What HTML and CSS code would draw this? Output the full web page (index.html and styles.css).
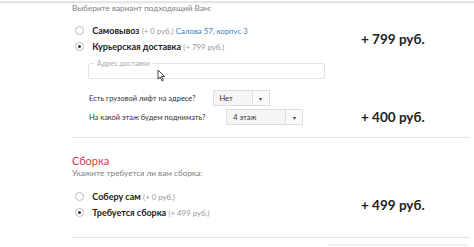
FILE: index.html
```html
<!DOCTYPE html>
<html>

<head>
    <title>Доставка и сборка</title>
    <link rel="stylesheet" href="styles.css">
</head>

<body>
    <div class="topline"></div>
    <div class="container">
        <p class="hint">Выберите вариант подходящий Вам:</p>

        <div class="row row-options">
            <div class="options">
                <label class="option">
                    <span class="radio"></span>
                    <b>Самовывоз</b> <span class="extra">(+ 0 руб.)</span> <span class="link">Салова 57, корпус 3</span>
                </label>
                <label class="option">
                    <span class="radio checked"></span>
                    <b>Курьерская доставка</b> <span class="extra">(+ 799 руб.)</span>
                </label>
            </div>
            <div class="price">+ 799 руб.</div>
        </div>

        <fieldset class="address">
            <legend>Адрес доставки</legend>
            <svg class="cursor" width="9" height="13" viewBox="0 0 9 13">
                <path d="M1 1 L1 10 L3.2 8 L5 12 L6.4 11.3 L4.6 7.5 L7.6 7.5 Z" fill="#fff" stroke="#333" stroke-width="0.9" stroke-linejoin="round"/>
            </svg>
        </fieldset>

        <div class="row row-select row-lift">
            <div class="field">
                <div class="question">Есть грузовой лифт на адресе?</div>
                <div class="select select-lift"><span>Нет</span><i>▾</i></div>
            </div>
        </div>

        <div class="row row-select">
            <div class="field">
                <div class="question">На какой этаж будем поднимать?</div>
                <div class="select select-floor"><span>4 этаж</span><i>▾</i></div>
            </div>
            <div class="price">+ 400 руб.</div>
        </div>

        <hr class="divider">

        <h2>Сборка</h2>
        <p class="hint">Укажите требуется ли вам сборка:</p>

        <div class="row row-options row-assembly">
            <div class="options">
                <label class="option">
                    <span class="radio"></span>
                    <b>Соберу сам</b> <span class="extra">(+ 0 руб.)</span>
                </label>
                <label class="option">
                    <span class="radio checked"></span>
                    <b>Требуется сборка</b> <span class="extra">(+ 499 руб.)</span>
                </label>
            </div>
            <div class="price">+ 499 руб.</div>
        </div>

        <hr class="divider divider-bottom">
        <div class="next-bar"></div>
    </div>
</body>

</html>
```

FILE: styles.css
```css
body {
    margin: 0;
    font-family: Lato, 'Liberation Sans', sans-serif;
    color: #222;
    background: #fff;
    overflow: hidden;
}

.topline {
    height: 2px;
    margin-top: 1px;
    background: #e6e6e6;
    box-shadow: 0 1px 2px rgba(0, 0, 0, 0.05);
}

.container {
    padding-left: 72px;
    padding-right: 4px;
}

.hint {
    margin: 0;
    font-size: 8.2px;
    line-height: 10px;
    color: #808080;
}

.row {
    display: flex;
    align-items: center;
}

.row-options {
    margin-top: 10px;
}

.options {
    width: 289px;
}

.option {
    display: block;
    height: 16px;
    line-height: 16px;
    padding-left: 3px;
    font-size: 9px;
    white-space: nowrap;
}

.option b {
    font-weight: 700;
    color: #222;
}

.extra {
    color: #999;
    font-size: 7.8px;
}

.link {
    color: #3d7fc8;
    font-size: 7.8px;
}

.radio {
    display: inline-block;
    vertical-align: middle;
    position: relative;
    width: 7px;
    height: 7px;
    margin: -2px 6px 0 0;
    border: 1px solid #bbb;
    border-radius: 50%;
}

.radio.checked::after {
    content: '';
    position: absolute;
    left: 2px;
    top: 2px;
    width: 3px;
    height: 3px;
    border-radius: 50%;
    background: #333;
}

.price {
    font-size: 13.5px;
    font-weight: 700;
    color: #222;
    white-space: nowrap;
}

.address {
    position: relative;
    margin: 5px 0 0 16px;
    width: 237px;
    height: 19px;
    padding: 0;
    border: 1px solid #e2e2e2;
    border-radius: 2px;
    box-sizing: border-box;
}

.address legend {
    margin-left: 5px;
    padding: 0 3px;
    font-size: 7.2px;
    line-height: 7px;
    color: #aaa;
}

.cursor {
    position: absolute;
    left: 68px;
    top: 2px;
}

.row-select {
    height: 18px;
}

.row-lift {
    margin-top: 10px;
}

.row-lift + .row-select {
    margin-top: 1px;
}

.field {
    width: 272px;
    margin-left: 17px;
    display: flex;
    align-items: center;
}

.question {
    font-size: 7.5px;
    color: #333;
}

.select {
    display: flex;
    align-items: stretch;
    height: 16px;
    box-sizing: border-box;
    border: 1px solid #ddd;
    background: #f5f5f5;
    font-size: 7.5px;
    color: #333;
}

.select span {
    flex: 1;
    display: flex;
    align-items: center;
    padding-left: 6px;
}

.select i {
    width: 16px;
    border-left: 1px solid #ddd;
    background: #fafafa;
    font-style: normal;
    font-size: 6px;
    display: flex;
    align-items: center;
    justify-content: center;
    color: #444;
}

.select-lift {
    width: 57px;
    margin-left: 17px;
}

.select-floor {
    width: 77px;
    margin-left: 21px;
}

.divider {
    margin: 11px 0 0;
    border: 0;
    border-top: 1px solid #e3e3e3;
}

h2 {
    margin: 16px 0 0;
    font-size: 11px;
    line-height: 14px;
    font-weight: 400;
    color: #d83a55;
}

.row-assembly {
    margin-top: 11px;
}

.divider-bottom {
    margin-top: 16px;
}

.next-bar {
    margin: 6px 2px 0 256px;
    height: 2px;
    background: #f0f0f0;
}
```
